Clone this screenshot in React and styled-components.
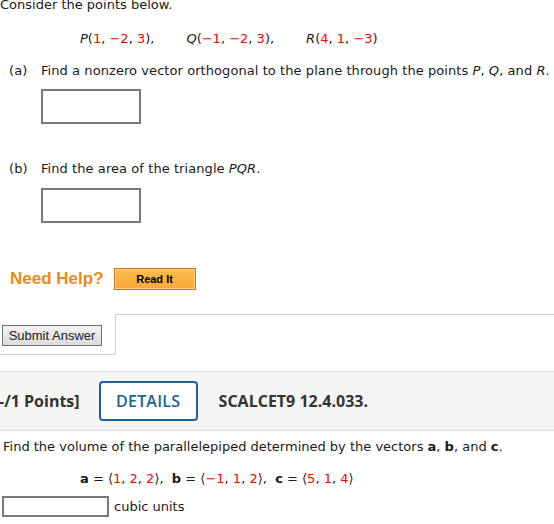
import React from 'react';
import styled, { createGlobalStyle } from 'styled-components';

const GlobalStyle = createGlobalStyle`
  html, body {
    margin: 0;
    padding: 0;
    background: #fff;
  }
  body {
    font-family: "DejaVu Sans", Verdana, sans-serif;
    font-size: 13px;
    color: #1a1a1a;
  }
`;

const Page = styled.div`
  width: 554px;
  height: 524px;
  overflow: hidden;
  margin-top: -3px;
`;

const Text = styled.div`
  line-height: 16px;
  padding-left: ${(p) => p.indent || 0}px;
  margin-top: ${(p) => p.top || 0}px;
  white-space: nowrap;
`;

const PartRow = styled.div`
  display: flex;
  margin-top: ${(p) => p.top || 0}px;
  line-height: 16px;
  white-space: nowrap;
  letter-spacing: 0.07px;
`;

const PartLabel = styled.span`
  width: 41px;
  padding-left: 9px;
  box-sizing: border-box;
`;

const Red = styled.span`
  color: #f00;
`;

const Gap = styled.span`
  display: inline-block;
  width: ${(p) => p.w}px;
`;

const AnswerBox = styled.div`
  width: ${(p) => p.w || 100}px;
  height: ${(p) => p.h || 35}px;
  box-sizing: border-box;
  border: 2px solid #7a7a7a;
  background: #fff;
  margin-left: ${(p) => p.left || 0}px;
  margin-top: ${(p) => p.top || 0}px;
`;

const HelpRow = styled.div`
  display: flex;
  align-items: center;
  margin-top: 45px;
  padding-left: 10px;
  gap: 10px;
`;

const HelpTitle = styled.span`
  font-family: "Liberation Sans", Arial, sans-serif;
  font-weight: bold;
  font-size: 17px;
  color: #ec8a16;
`;

const ReadIt = styled.button`
  width: 82px;
  height: 22px;
  padding: 0;
  font-family: "Liberation Sans", Arial, sans-serif;
  font-weight: bold;
  font-size: 11px;
  color: #000;
  border: 1px solid #c2741f;
  background: linear-gradient(#fcbc4c, #f9a83a);
  box-shadow: inset 0 0 0 1px #ffd58a;
  border-radius: 0;
`;

const SubmitWrap = styled.div`
  display: flex;
  margin-top: 24px;
`;

const SubmitCell = styled.div`
  width: 116px;
  height: 41px;
  box-sizing: border-box;
  border-right: 1px solid #cfcfcf;
  border-bottom: 1px solid #cfcfcf;
  border-bottom-right-radius: 3px;
  padding: 11px 0 0 2px;
`;

const SubmitRest = styled.div`
  flex: 1;
  border-top: 1px solid #cfcfcf;
`;

const SubmitButton = styled.button`
  font-family: "Liberation Sans", Arial, sans-serif;
  font-size: 13px;
  color: #222;
  height: 21px;
  width: 100px;
  padding: 0;
  border: 1px solid #707070;
  background: linear-gradient(#f2f2f2, #dcdcdc);
  border-radius: 0;
`;

const Band = styled.div`
  display: flex;
  align-items: center;
  height: 58px;
  margin-top: 16px;
  background: #f5f5f5;
  border-top: 1px solid #dcdcdc;
  border-bottom: 1px solid #dcdcdc;
  font-family: "Open Sans", sans-serif;
  font-weight: 700;
  font-size: 16px;
  color: #333;
`;

const Points = styled.span`
  margin-left: -1px;
`;

const DetailsButton = styled.button`
  margin-left: 19px;
  width: 99px;
  height: 40px;
  box-sizing: border-box;
  border: 2px solid #1c6198;
  border-radius: 4px;
  background: #fff;
  font-family: "Open Sans", sans-serif;
  font-weight: 600;
  font-size: 16px;
  color: #1c6198;
  letter-spacing: 0.2px;
`;

const Ref = styled.span`
  margin-left: 21px;
`;

const UnitsRow = styled.div`
  display: flex;
  align-items: center;
  gap: 5px;
  margin-top: 9px;
  padding-left: 2px;
`;

export default function App() {
  return (
    <Page>
      <GlobalStyle />
      <Text>Consider the points below.</Text>
      <Text indent={80} top={18}>
        <i>P</i>(<Red>1</Red>, <Red>−2</Red>, <Red>3</Red>),<Gap w={32} />
        <i>Q</i>(<Red>−1</Red>, <Red>−2</Red>, <Red>3</Red>),<Gap w={32} />
        <i>R</i>(<Red>4</Red>, <Red>1</Red>, <Red>−3</Red>)
      </Text>
      <PartRow top={16}>
        <PartLabel>(a)</PartLabel>
        <span>
          Find a nonzero vector orthogonal to the plane through the points <i>P</i>, <i>Q</i>, and <i>R</i>.
        </span>
      </PartRow>
      <AnswerBox left={41} top={10} />
      <PartRow top={37}>
        <PartLabel>(b)</PartLabel>
        <span>
          Find the area of the triangle <i>PQR</i>.
        </span>
      </PartRow>
      <AnswerBox left={41} top={11} />
      <HelpRow>
        <HelpTitle>Need Help?</HelpTitle>
        <ReadIt>Read It</ReadIt>
      </HelpRow>
      <SubmitWrap>
        <SubmitCell>
          <SubmitButton>Submit Answer</SubmitButton>
        </SubmitCell>
        <SubmitRest />
      </SubmitWrap>
      <Band>
        <Points>-/1 Points]</Points>
        <DetailsButton>DETAILS</DetailsButton>
        <Ref>SCALCET9 12.4.033.</Ref>
      </Band>
      <Text indent={3} top={8}>
        Find the volume of the parallelepiped determined by the vectors <b>a</b>, <b>b</b>, and <b>c</b>.
      </Text>
      <Text indent={80} top={16}>
        <b>a</b> = ⟨<Red>1</Red>, <Red>2</Red>, <Red>2</Red>⟩,&nbsp; <b>b</b> = ⟨<Red>−1</Red>, <Red>1</Red>, <Red>2</Red>⟩,&nbsp; <b>c</b> = ⟨<Red>5</Red>, <Red>1</Red>, <Red>4</Red>⟩
      </Text>
      <UnitsRow>
        <AnswerBox w={107} h={21} />
        <span>cubic units</span>
      </UnitsRow>
    </Page>
  );
}
